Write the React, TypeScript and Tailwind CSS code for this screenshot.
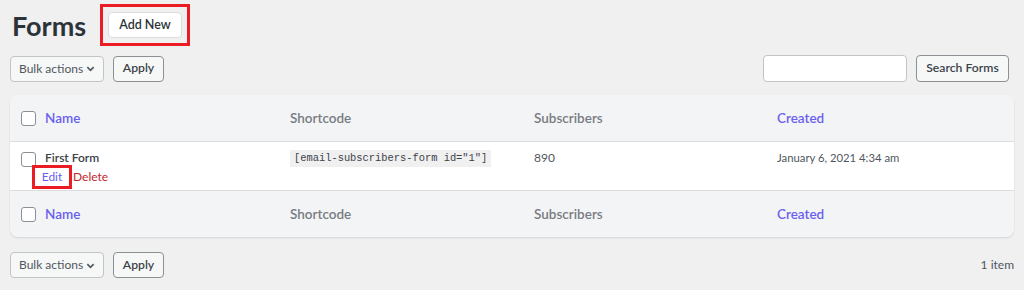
import React from "react";

const font = { fontFamily: 'Lato, "Noto Sans", sans-serif' };

function Checkbox() {
  return <span className="inline-block w-[15px] h-[15px] rounded-[3px] border border-[#8c8f94] bg-white shrink-0" />;
}

function BulkNav() {
  return (
    <div className="flex items-center gap-[9px]">
      <div className="h-[26px] w-[94px] flex items-center justify-between pl-[8px] pr-[8px] rounded-[4px] border border-[#c3c4c7] bg-[#f6f7f7] text-[12px] text-[#50575e] whitespace-nowrap">
        <span>Bulk actions</span>
        <svg width="9" height="9" viewBox="0 0 10 10" fill="none" stroke="#50575e" strokeWidth="1.8">
          <path d="M1.5 3.5 L5 7 L8.5 3.5" />
        </svg>
      </div>
      <button className="h-[26px] w-[51px] rounded-[4px] border border-[#8c8f94] bg-[#f6f7f7] text-[12.2px] font-semibold text-[#3c434a] whitespace-nowrap">
        Apply
      </button>
    </div>
  );
}

function HeaderRow({ bordered, h }: { bordered?: boolean; h: string }) {
  return (
    <div className={`grid grid-cols-[269px_244px_243px_1fr] items-center ${h} pl-[11px] text-[13.5px] font-semibold ${bordered ? "border-b border-[#dcdcde]" : ""}`}>
      <div className="flex items-center gap-[9px]">
        <Checkbox />
        <span className="text-[#6a5ff0]">Name</span>
      </div>
      <div className="text-[#787c82]">Shortcode</div>
      <div className="text-[#787c82]">Subscribers</div>
      <div className="text-[#6a5ff0]">Created</div>
    </div>
  );
}

export default function App() {
  return (
    <div className="w-[1024px] h-[290px] bg-[#f0f0f1] px-[10px] overflow-hidden" style={font}>
      <div className="flex items-center pt-[4px] h-[42px] box-content">
        <h1 className="text-[27px] font-bold text-[#2c3338] leading-none ml-[2px] w-[88px]">Forms</h1>
        <div className="border-[3px] border-[#ec1c24] h-[42px] w-[90px] flex items-center justify-center">
          <button className="h-[26px] w-[74px] rounded-[4px] border border-[#dcdcde] bg-white text-[12.5px] font-semibold text-[#2c3338] whitespace-nowrap">
            Add New
          </button>
        </div>
      </div>
      <div className="flex items-center justify-between mt-[9px] h-[27px]">
        <BulkNav />
        <div className="flex items-center gap-[9px] mr-[5px]">
          <div className="h-[27px] w-[144px] rounded-[4px] border border-[#c3c4c7] bg-white" />
          <button className="h-[27px] w-[93px] rounded-[4px] border border-[#8c8f94] bg-[#f6f7f7] text-[12.2px] font-semibold text-[#3c434a] whitespace-nowrap">
            Search Forms
          </button>
        </div>
      </div>
      <div className="mt-[13px] rounded-[8px] bg-[#f3f4f6] shadow-[0_1px_2px_rgba(0,0,0,0.12)] overflow-hidden">
        <HeaderRow bordered h="h-[47px]" />
        <div className="grid grid-cols-[269px_244px_243px_1fr] items-start h-[49px] pl-[11px] pt-[7px] bg-white border-b border-[#dcdcde] text-[11.3px] text-[#50575e]">
          <div className="flex gap-[9px]">
            <span className="mt-[3px]"><Checkbox /></span>
            <div className="flex flex-col">
              <span className="font-semibold text-[12px] text-[#3c434a] leading-[18px]">First Form</span>
              <div className="flex items-center leading-[18px] -ml-[13px] mt-[-2px]">
                <span className="border-[3px] border-[#ec1c24] h-[24px] w-[40px] flex items-center justify-center text-[#6a5ff0] text-[12px]">Edit</span>
                <span className="ml-[1px] text-[#c0282d] text-[12px]">Delete</span>
              </div>
            </div>
          </div>
          <div>
            <code className="inline-block bg-[#f0f0f1] px-[4px] h-[17px] leading-[17px] text-[10.4px] text-[#3c434a]" style={{ fontFamily: '"Liberation Mono", monospace' }}>
              [email-subscribers-form id="1"]
            </code>
          </div>
          <div className="leading-[18px] text-[12px]">890</div>
          <div className="leading-[18px] text-[11.3px]">January 6, 2021 4:34 am</div>
        </div>
        <HeaderRow h="h-[46px]" />
      </div>
      <div className="flex items-center justify-between mt-[15px]">
        <BulkNav />
        <span className="text-[12px] text-[#50575e]">1 item</span>
      </div>
    </div>
  );
}
